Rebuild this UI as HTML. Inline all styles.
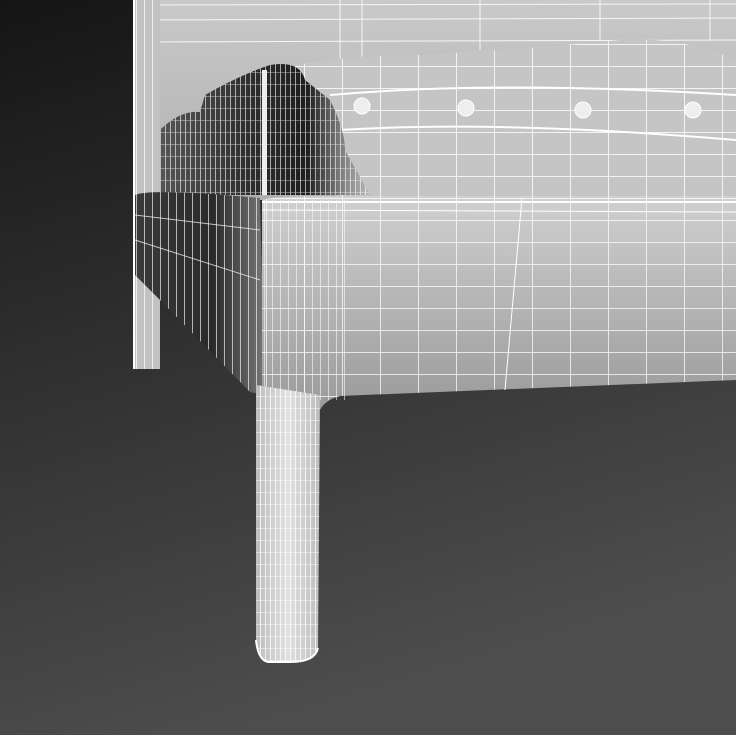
<!DOCTYPE html>
<html><head><style>html,body{margin:0;padding:0;background:#2a2a2a}svg{display:block}</style></head>
<body>
<svg width="736" height="735" viewBox="0 0 736 735" xmlns="http://www.w3.org/2000/svg">
<defs>
<linearGradient id="bg" x1="0" y1="0" x2="0.3" y2="1"><stop offset="0" stop-color="#151515"/><stop offset="1" stop-color="#4d4d4d"/></linearGradient>
<linearGradient id="hb" x1="0" y1="0" x2="0" y2="1"><stop offset="0" stop-color="#c9c9c9"/><stop offset="1" stop-color="#b0b0b0"/></linearGradient>
<linearGradient id="front" x1="0" y1="0" x2="0" y2="1"><stop offset="0" stop-color="#d0d0d0"/><stop offset="1" stop-color="#9a9a9a"/></linearGradient>
<linearGradient id="side" x1="0" y1="0" x2="1" y2="0"><stop offset="0" stop-color="#3a3a3a"/><stop offset="0.6" stop-color="#2a2a2a"/><stop offset="1" stop-color="#777"/></linearGradient>
<linearGradient id="arm" x1="0" y1="0" x2="1" y2="0"><stop offset="0" stop-color="#555"/><stop offset="0.45" stop-color="#2c2c2c"/><stop offset="0.7" stop-color="#1e1e1e"/><stop offset="0.85" stop-color="#777"/><stop offset="1" stop-color="#bbb"/></linearGradient>
<linearGradient id="leg" x1="0" y1="0" x2="1" y2="0"><stop offset="0" stop-color="#bdbdbd"/><stop offset="0.5" stop-color="#e0e0e0"/><stop offset="1" stop-color="#bcbcbc"/></linearGradient>
<pattern id="vl" width="8" height="8" patternUnits="userSpaceOnUse"><rect x="0" y="0" width="1" height="8" fill="#fff" opacity="0.8"/></pattern>
<pattern id="vl2" width="5" height="12" patternUnits="userSpaceOnUse"><rect x="0" y="0" width="1" height="12" fill="#fff" opacity="0.85"/><rect x="0" y="0" width="5" height="1" fill="#fff" opacity="0.5"/></pattern>
<pattern id="grid" width="38" height="22" patternUnits="userSpaceOnUse"><rect width="1" height="22" fill="#fff" opacity="0.8"/><rect width="38" height="1" fill="#fff" opacity="0.8"/></pattern>
</defs>
<rect width="736" height="735" fill="url(#bg)"/>
<rect x="133" y="0" width="603" height="200" fill="url(#hb)"/>
<g stroke="#fff" stroke-width="1" opacity="0.85">
<line x1="133" y1="20" x2="736" y2="18"/><line x1="133" y1="42" x2="736" y2="40"/><line x1="133" y1="5" x2="736" y2="4"/>
<line x1="340" y1="0" x2="340" y2="60"/><line x1="362" y1="0" x2="362" y2="60"/><line x1="480" y1="0" x2="480" y2="50"/><line x1="600" y1="0" x2="600" y2="40"/><line x1="710" y1="0" x2="710" y2="40"/>
</g>
<rect x="133" y="0" width="27" height="369" fill="#c2c2c2"/>
<rect x="133" y="0" width="27" height="369" fill="url(#vl)" opacity="0.9"/>
<rect x="133" y="0" width="2" height="369" fill="#fff"/>
<path d="M265 72 Q330 55 420 55 Q540 48 620 40 Q680 36 736 60 L736 200 L340 200 Z" fill="#c5c5c5"/>
<path d="M265 72 Q330 55 420 55 Q540 48 620 40 Q680 36 736 60 L736 200 L340 200 Z" fill="url(#grid)"/>
<g fill="#eee" stroke="#fff"><circle cx="362" cy="106" r="8"/><circle cx="466" cy="108" r="8"/><circle cx="583" cy="110" r="8"/><circle cx="693" cy="110" r="8"/></g>
<path d="M340 130 Q500 120 736 140" stroke="#fff" fill="none" stroke-width="2"/>
<path d="M330 95 Q500 80 736 95" stroke="#fff" fill="none" stroke-width="2"/>
<path d="M160 130 Q180 110 200 112 L205 95 Q240 75 270 65 Q300 60 305 80 L330 100 Q345 130 345 150 L370 195 L160 195 Z" fill="url(#arm)"/>
<path d="M160 130 Q180 110 200 112 L205 95 Q240 75 270 65 Q300 60 305 80 L330 100 Q345 130 345 150 L370 195 L160 195 Z" fill="url(#vl2)" opacity="0.7"/>
<rect x="262" y="70" width="5" height="125" fill="#eee"/>
<path d="M135 195 Q150 188 260 198 L265 395 L250 392 L160 300 L135 275 Z" fill="url(#side)"/>
<path d="M135 195 Q150 188 260 198 L265 395 L250 392 L160 300 L135 275 Z" fill="url(#vl)" opacity="0.8"/>
<path d="M135 240 L260 280 M135 215 L260 230" stroke="#fff" stroke-width="1" opacity="0.7"/>
<path d="M262 200 Q275 196 330 196 L736 196 L736 380 L340 396 Q325 400 320 410 L262 395 Z" fill="url(#front)"/>
<path d="M262 200 Q275 196 330 196 L736 196 L736 380 L340 396 Q325 400 320 410 L262 395 Z" fill="url(#grid)" opacity="0.9"/>
<rect x="262" y="200" width="88" height="200" fill="url(#vl)" opacity="0.7"/>
<line x1="262" y1="202" x2="736" y2="202" stroke="#fff" stroke-width="2"/>
<line x1="262" y1="210" x2="736" y2="212" stroke="#fff" stroke-width="1"/>
<line x1="522" y1="198" x2="505" y2="390" stroke="#fff"/>
<path d="M256 385 L320 395 L318 648 Q315 662 290 662 L268 662 Q258 660 256 640 Z" fill="url(#leg)"/>
<path d="M256 385 L320 395 L318 648 Q315 662 290 662 L268 662 Q258 660 256 640 Z" fill="url(#vl2)" opacity="0.9"/>
<path d="M256 640 Q258 660 268 662 L290 662 Q315 662 318 648" stroke="#fff" fill="none" stroke-width="2"/>
</svg>
</body></html>
